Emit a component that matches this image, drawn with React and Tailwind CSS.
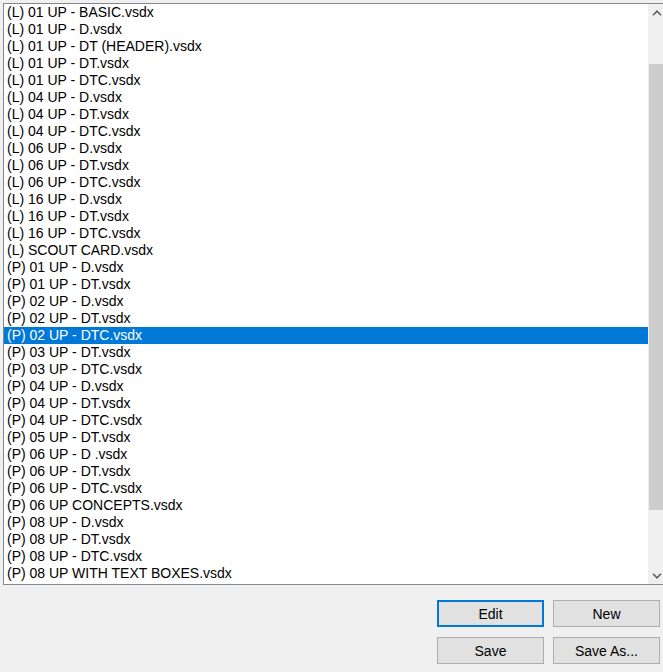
const files = [
  "(L) 01 UP - BASIC.vsdx",
  "(L) 01 UP - D.vsdx",
  "(L) 01 UP - DT (HEADER).vsdx",
  "(L) 01 UP - DT.vsdx",
  "(L) 01 UP - DTC.vsdx",
  "(L) 04 UP - D.vsdx",
  "(L) 04 UP - DT.vsdx",
  "(L) 04 UP - DTC.vsdx",
  "(L) 06 UP - D.vsdx",
  "(L) 06 UP - DT.vsdx",
  "(L) 06 UP - DTC.vsdx",
  "(L) 16 UP - D.vsdx",
  "(L) 16 UP - DT.vsdx",
  "(L) 16 UP - DTC.vsdx",
  "(L) SCOUT CARD.vsdx",
  "(P) 01 UP - D.vsdx",
  "(P) 01 UP - DT.vsdx",
  "(P) 02 UP - D.vsdx",
  "(P) 02 UP - DT.vsdx",
  "(P) 02 UP - DTC.vsdx",
  "(P) 03 UP - DT.vsdx",
  "(P) 03 UP - DTC.vsdx",
  "(P) 04 UP - D.vsdx",
  "(P) 04 UP - DT.vsdx",
  "(P) 04 UP - DTC.vsdx",
  "(P) 05 UP - DT.vsdx",
  "(P) 06 UP - D .vsdx",
  "(P) 06 UP - DT.vsdx",
  "(P) 06 UP - DTC.vsdx",
  "(P) 06 UP CONCEPTS.vsdx",
  "(P) 08 UP - D.vsdx",
  "(P) 08 UP - DT.vsdx",
  "(P) 08 UP - DTC.vsdx",
  "(P) 08 UP WITH TEXT BOXES.vsdx",
];

const selected = "(P) 02 UP - DTC.vsdx";

const Chevron = ({ up }) => (
  <svg width="10" height="6" viewBox="0 0 10 6" className="block">
    <polyline
      points={up ? "1,5.2 5,1.2 9,5.2" : "1,0.8 5,4.8 9,0.8"}
      fill="none"
      stroke="#606060"
      strokeWidth="1.6"
    />
  </svg>
);

const Button = ({ children, primary }) => (
  <button
    className={
      "w-[107px] h-[27px] bg-[#e1e1e1] text-[14px] text-black leading-none " +
      (primary ? "border-2 border-[#0078d7]" : "border border-[#adadad]")
    }
  >
    {children}
  </button>
);

export default function App() {
  return (
    <div
      className="w-[663px] h-[672px] bg-[#f0f0f0] overflow-hidden pt-[3px] pl-[3px]"
      style={{ fontFamily: '"Liberation Sans", Arial, sans-serif' }}
    >
      <div className="w-[663px] flex border border-[#828790] bg-white">
        <ul className="w-[644px] h-[580px] overflow-hidden">
          {files.map((f) => (
            <li
              key={f}
              className={
                "h-[17px] leading-[17px] pl-[3px] text-[14px] whitespace-nowrap " +
                (f === selected ? "bg-[#0078d7] text-white" : "text-black")
              }
            >
              {f}
            </li>
          ))}
        </ul>
        <div className="w-[17px] h-[580px] bg-[#f0f0f0] flex flex-col">
          <div className="h-[17px] flex items-center justify-center">
            <Chevron up />
          </div>
          <div className="flex-1 pt-[43px] pb-[57px] px-[1px]">
            <div className="h-full bg-[#cdcdcd]" />
          </div>
          <div className="h-[17px] flex items-center justify-center">
            <Chevron />
          </div>
        </div>
      </div>
      <div className="mt-[15px] pr-[3px] flex flex-col items-end gap-[10px]">
        <div className="flex gap-[9px]">
          <Button primary>Edit</Button>
          <Button>New</Button>
        </div>
        <div className="flex gap-[9px]">
          <Button>Save</Button>
          <Button>Save As...</Button>
        </div>
      </div>
    </div>
  );
}
